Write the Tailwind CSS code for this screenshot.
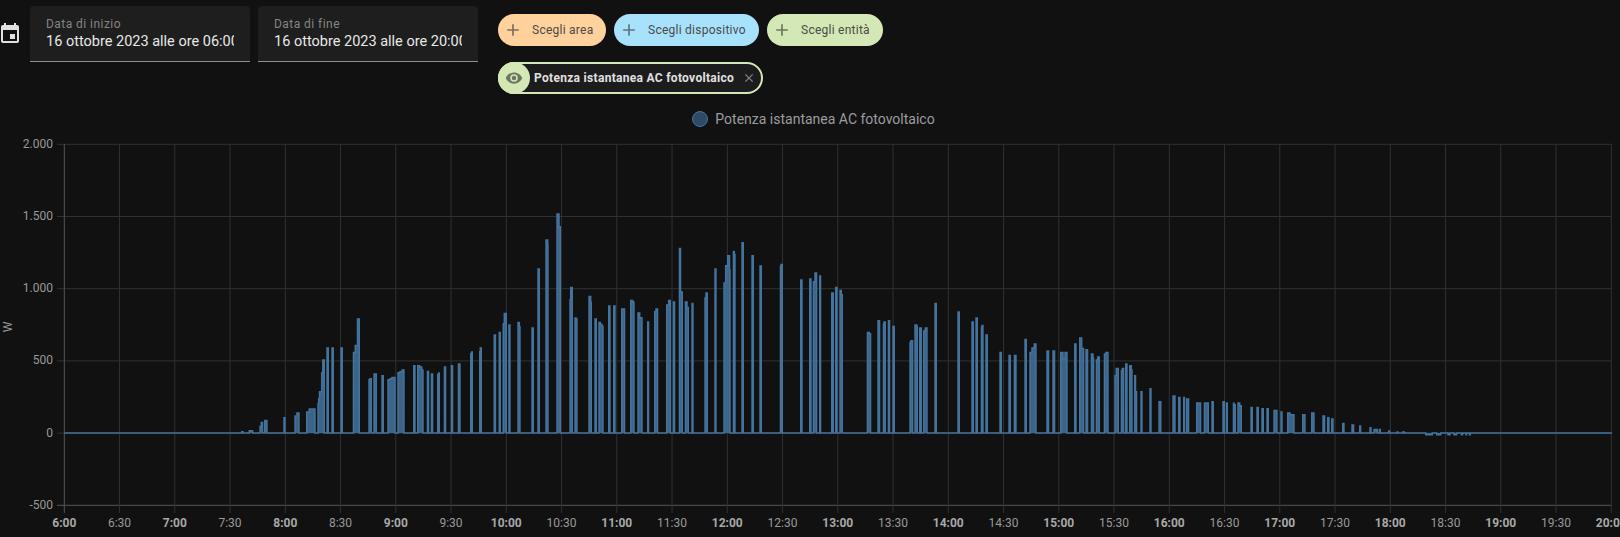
<!DOCTYPE html>
<html lang="it">
  <head>
    <meta charset="utf-8"/>
    <title>Cronologia</title>
    <script src="https://cdn.jsdelivr.net/npm/@tailwindcss/browser@4"></script>
  </head>
  <body class="bg-[#111111] font-[Roboto,sans-serif] overflow-hidden">
    <div class="flex h-[108px]">
      <svg class="w-6 h-6 ml-[-2px] mt-[22px] shrink-0 text-[#e1e1e1]" viewBox="0 0 24 24" fill="currentColor"><path d="M19,19H5V8H19M16,1V3H8V1H6V3H5C3.89,3 3,3.89 3,5V19A2,2 0 0,0 5,21H19A2,2 0 0,0 21,19V5C21,3.89 20.1,3 19,3H18V1M17,12H12V17H17V12Z"/></svg>
      <div class="flex gap-2 ml-2 mt-[6px] h-[56px]">
        <div class="w-[220px] bg-[#1e1e1e] rounded-t border-b border-[#8f8f8f] pl-4 pr-4 pt-[10px] overflow-hidden">
          <div class="text-xs leading-[16px] text-[#858585] tracking-[0.45px]">Data di inizio</div>
          <div class="text-[14.5px] leading-[20px] text-[#e8e8e8] overflow-hidden whitespace-nowrap">16 ottobre 2023 alle ore 06:00</div>
        </div>
        <div class="w-[220px] bg-[#1e1e1e] rounded-t border-b border-[#8f8f8f] pl-4 pr-4 pt-[10px] overflow-hidden">
          <div class="text-xs leading-[16px] text-[#858585] tracking-[0.45px]">Data di fine</div>
          <div class="text-[14.5px] leading-[20px] text-[#e8e8e8] overflow-hidden whitespace-nowrap">16 ottobre 2023 alle ore 20:00</div>
        </div>
      </div>
      <div class="ml-5 mt-[14px] flex flex-col gap-4">
        <div class="flex gap-2">
          <div class="h-8 w-[108px] rounded-full bg-[#ffd19c] flex items-center pl-[5px] text-[#4a4a48] text-xs tracking-[0.25px]">
            <svg class="w-5 h-5 text-[#7a6f5e] mr-[9px] shrink-0" viewBox="0 0 24 24" fill="currentColor"><path d="M19,13H13V19H11V13H5V11H11V5H13V11H19V13Z"/></svg>Scegli area
          </div>
          <div class="h-8 w-[145px] rounded-full bg-[#a8e1fb] flex items-center pl-[5px] text-[#4a4a48] text-xs tracking-[0.25px]">
            <svg class="w-5 h-5 text-[#5f7680] mr-[9px] shrink-0" viewBox="0 0 24 24" fill="currentColor"><path d="M19,13H13V19H11V13H5V11H11V5H13V11H19V13Z"/></svg>Scegli dispositivo
          </div>
          <div class="h-8 w-[116px] rounded-full bg-[#d3e8b5] flex items-center pl-[5px] text-[#4a4a48] text-xs tracking-[0.25px]">
            <svg class="w-5 h-5 text-[#6b7760] mr-[9px] shrink-0" viewBox="0 0 24 24" fill="currentColor"><path d="M19,13H13V19H11V13H5V11H11V5H13V11H19V13Z"/></svg>Scegli entità
          </div>
        </div>
        <div class="h-8 w-[265px] rounded-full border-2 border-[#d3e8b5] bg-[#1c1c1c] flex items-center box-border">
          <div class="w-8 h-8 -ml-[2px] rounded-full bg-[#d3e8b5] flex items-center justify-center shrink-0">
            <svg class="w-[18px] h-[18px] text-[#6b7760]" viewBox="0 0 24 24" fill="currentColor"><path d="M12,9A3,3 0 0,0 9,12A3,3 0 0,0 12,15A3,3 0 0,0 15,12A3,3 0 0,0 12,9M12,17A5,5 0 0,1 7,12A5,5 0 0,1 12,7A5,5 0 0,1 17,12A5,5 0 0,1 12,17M12,4.5C7,4.5 2.73,7.61 1,12C2.73,16.39 7,19.5 12,19.5C17,19.5 21.27,16.39 23,12C21.27,7.61 17,4.5 12,4.5Z"/></svg>
          </div>
          <span class="ml-[4px] text-xs font-bold text-[#e1e1e1] tracking-[0.3px] whitespace-nowrap">Potenza istantanea AC fotovoltaico</span>
          <svg class="w-[14px] h-[14px] ml-[8px] text-[#8a8a8a] shrink-0" viewBox="0 0 24 24" fill="currentColor"><path d="M19,6.41L17.59,5L12,10.59L6.41,5L5,6.41L10.59,12L5,17.59L6.41,19L12,13.41L17.59,19L19,17.59L13.41,12L19,6.41Z"/></svg>
        </div>
      </div>
    </div>
    <div class="flex justify-center items-center h-[21px] mb-[2px] pl-[7px] gap-[7px]">
      <span class="w-4 h-4 rounded-full bg-[#2f4a66] border border-[#44739e]"></span>
      <span class="text-sm text-[#9b9da0]">Potenza istantanea AC fotovoltaico</span>
    </div>
    <svg id="chart" class="block w-[1620px] h-[406px]" viewBox="0 131 1620 406"></svg>
    <script>
      const NS = "http://www.w3.org/2000/svg";
      const chart = document.getElementById("chart");
      const x0 = 64.3, stepX = 55.25, zeroY = 433, stepY = 72.2, lineColor = "#44739e";

      // [left, right, top] in page pixels, read off the picture
      const bars = [
        [241,243.7,431],[248.5,253.3,430],[259.3,261.3,425.7],[261.3,263.3,421.7],[264,267.7,419.7],[283.3,285.7,417],
        [294.3,297,415.3],[297,299.7,412.3],[306,309.3,411.3],[309.3,315.7,408.3],[317.3,318.7,402.3],[318.7,319.5,398],
        [319.5,321.5,391],[321.7,322.8,372.3],[322.8,325,359.3],[326.3,329,347.3],[331.3,334,347.3],[340.3,343,347.3],
        [352.7,355.3,351.7],[355.3,357.5,344.7],[357.5,360,318.3],[368.3,370,379],[370,372,378],[373.3,377,373.3],
        [381.3,384,375],[387.3,390,379],[390,392,378],[392,395.7,376.7],[397.3,400,372],[400,402,371],[402,404.7,369.3],
        [413,415.7,365],[417,419.7,365],[419.7,421.7,366.3],[421.7,423.7,369.3],[426.7,429.3,370.7],[430.7,433.3,373.3],
        [437,438.7,373.7],[438.7,440,372.3],[443.7,446.3,366.3],[450.7,453.3,365],[457.7,460.7,363.3],[470,471.7,352.7],
        [471.7,473,351.3],[479,480.3,350.3],[480.3,482,347.3],[493.5,496.2,334.3],[498.5,501,331.7],[502.5,504.3,323],
        [504.3,507,312.7],[508.2,510.7,324.3],[517.3,519.3,321.7],[519.3,520.7,326],[531.3,534,327.3],[537.3,540,268.3],
        [545.3,547.7,239.3],[547.7,548.7,243.7],[556.3,559,213.3],[559,561,226],[569.3,570.7,298.3],[570.7,573,286.7],
        [574.3,576,317.3],[576,577.7,318.3],[588.3,590.7,295.7],[590.7,592,301.7],[594.3,597,318.3],[598.3,600.3,321.7],
        [600.3,602,323.7],[602,603.7,325.7],[608,610.7,305.3],[613,615.7,305.3],[621,625.3,308.3],[630,632.7,299.7],
        [632.7,634.7,301.3],[637.3,639.7,312.3],[639.7,642.7,317],[647,649.3,321.3],[654,656,311],[656,658.3,308.3],
        [666,668.3,304.3],[668.7,671,299.7],[672.7,675.3,301.3],[678.7,680.5,247.7],[680.5,683,291.3],[684.7,687,301.3],
        [687,689,306.7],[691.3,693.7,302.7],[704.3,706,297.3],[706,708,292.3],[714.3,716.7,268.3],[723.3,725.7,282.3],
        [725.7,727.7,265],[727.7,729.5,255],[729.5,730.7,269],[732.7,734.3,250.7],[734.3,735.7,253.7],[741.3,744,242],
        [751.3,754,255],[759.3,762,265.3],[779.7,781,265.3],[781,783,263.7],[800,802.7,279.3],[809,811.7,278.3],
        [812.7,815,281],[815,817.3,272.3],[819,821.3,275.3],[831,834,292.3],[835,837.7,286.7],[839.3,841.3,289.7],
        [841.3,843,294],[866.7,869.3,331.7],[869.3,871.3,333],[877.3,880.3,320],[882.7,884,322.7],[884,886,321.3],
        [887.7,890.3,320],[892.3,895,325.7],[909.3,911,341.7],[911,913.3,340],[914.3,916.7,324.3],[916.7,918,325.7],
        [919,922,327.3],[923,925.3,330.3],[925.3,927.7,327.3],[934.3,937,302.7],[957.3,960,311.3],[971.3,974,321.3],
        [975.3,978,317.3],[980.7,982,326],[982,983.7,324.7],[985.3,988,334.3],[999.3,1002,351.7],[1008.3,1011,354.7],
        [1013.7,1016.7,354.7],[1024.3,1027,338.7],[1029.3,1032,351.7],[1032,1034.3,347.3],[1034.3,1036.7,343.3],
        [1046.3,1049.3,350.3],[1052.3,1055.3,350.3],[1060,1063,351.7],[1063,1065,357.7],[1065,1067.7,351.7],[1074,1076.7,343.3],
        [1079,1081.7,337.3],[1081.7,1084.3,347.7],[1085.3,1088.3,349],[1090.7,1093,353.3],[1093,1094.3,357.7],
        [1095.7,1097.7,359.3],[1097.7,1100,356.3],[1103.7,1106,353.3],[1106,1108.7,351.7],[1114.3,1116.3,375],
        [1116.3,1119,367.7],[1120.7,1122.3,370],[1122.3,1124.3,367.7],[1125,1127.7,363.3],[1129,1131.3,365],
        [1131.3,1132.7,369.3],[1134,1135.5,375],[1135.5,1137.3,391],[1140.3,1142.7,391],[1149.3,1151.7,388],
        [1158.3,1161.5,401],[1172.3,1175.7,395.3],[1178,1180.7,396.7],[1183,1185.3,396.7],[1186,1189.3,398.3],
        [1196,1201.3,402.3],[1203.7,1209,402.3],[1211.3,1214,401],[1222.3,1225,401],[1225.7,1228,402.3],[1232.7,1234,402.3],
        [1234,1236,404],[1237.3,1239.7,402.3],[1239.7,1242,405],[1250.3,1253,406.7],[1256.3,1259,406.7],[1261.3,1264,408],
        [1266.3,1269,408],[1273.3,1277.7,409.7],[1280.3,1282.7,411.3],[1287,1290,412.3],[1290,1294.7,414],[1302,1305.7,414],
        [1311,1314.7,412.3],[1322.3,1325.3,415.3],[1327,1329.7,417],[1331,1333.7,418.3],[1342,1344.7,422.7],
        [1351.3,1354.3,424.3],[1359,1361.3,425.3],[1369.3,1371.7,427],[1373.3,1378,428.7],[1378.7,1381,428.7],
        [1388,1390.3,430.3],[1396.3,1398.7,431.3],[1402,1405,431.3],
        [1425,1433,435.5],[1436,1441.5,435.5],[1447.3,1450.7,435.5],[1453.3,1457.3,435.5],[1460.7,1463.3,435.5],[1465.3,1467.3,435.5],[1468.7,1471,435.5]
      ];

      const add = (tag, attrs, text) => {
        const el = document.createElementNS(NS, tag);
        for (const k in attrs) el.setAttribute(k, attrs[k]);
        if (text) el.textContent = text;
        chart.appendChild(el);
        return el;
      };

      // grid
      for (let i = 0; i <= 5; i++) {
        const y = 144.3 + i * stepY;
        add("line", {x1: 57, x2: 1612, y1: y, y2: y, stroke: i === 5 ? "#555555" : "#313131"});
        add("text", {x: 53, y: y + 3.5, "text-anchor": "end", "font-size": 12, fill: "#9a9a9a"}, ["2.000","1.500","1.000","500","0","-500"][i]);
      }
      for (let i = 0; i <= 28; i++) {
        const x = x0 + i * stepX;
        add("line", {x1: x, x2: x, y1: 144, y2: 513, stroke: i === 0 ? "#555555" : "#313131"});
        const h = 6 + Math.floor(i / 2);
        add("text", {x: x, y: 527, "text-anchor": "middle", "font-size": 12, "font-weight": i % 2 ? 400 : 700, fill: i % 2 ? "#9a9a9a" : "#a8a8a8"}, h + (i % 2 ? ":30" : ":00"));
      }
      add("text", {x: 0, y: 0, transform: "translate(12 327) rotate(-90)", "text-anchor": "middle", "font-size": 12, fill: "#9a9a9a"}, "W");

      // step line with area fill
      const inset = 0.75;
      let d = `M${x0},${zeroY}`;
      bars.forEach(([l, r, t], i) => {
        const top = t < zeroY ? t + inset : t - inset;
        const joined = i > 0 && l - bars[i - 1][1] < 0.5;
        d += `H${joined ? l : l + inset}V${top}H${r - inset}`;
        const next = bars[i + 1];
        if (!next || next[0] - r >= 0.5) d += `V${zeroY}`;
      });
      d += `H1612`;
      add("path", {d: d, fill: lineColor, "fill-opacity": 0.85, stroke: lineColor, "stroke-width": 1.5});
    </script>
  </body>
</html>
